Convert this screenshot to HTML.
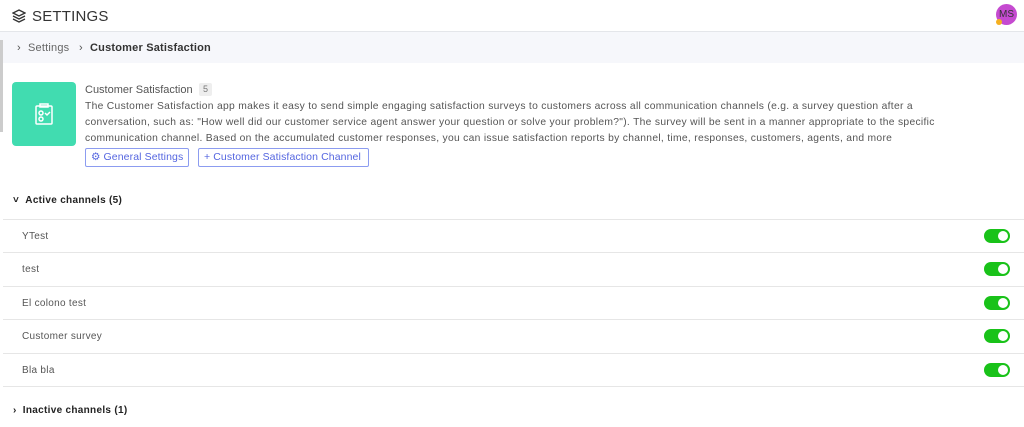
<!DOCTYPE html>
<html><head><style>
*{margin:0;padding:0;box-sizing:border-box}
body{width:1024px;height:427px;overflow:hidden;background:#fff;font-family:"Liberation Sans",sans-serif;color:#444;position:relative}
.hdr{position:absolute;left:0;top:0;width:1024px;height:32px;border-bottom:1px solid #e4e6ea;background:#fff}
.hdr .t{position:absolute;left:32px;top:8px;font-size:15px;color:#333;letter-spacing:.2px}
.bc{position:absolute;left:0;top:32px;width:1024px;height:31px;background:#f6f7fb;font-size:11px;letter-spacing:.2px}
.bc span{position:absolute;top:10px}
.strip{position:absolute;left:0;top:40px;width:3px;height:92px;background:#ccc}
.icon{position:absolute;left:12px;top:82px;width:64px;height:64px;background:#41dcb0;border-radius:4px}
.title{position:absolute;left:85px;top:84px;font-size:11px;color:#555;letter-spacing:0}
.badge{position:absolute;left:199px;top:83px;width:13px;height:13px;background:#eee;font-size:9px;color:#777;text-align:center;line-height:13px;border-radius:2px}
.desc{position:absolute;left:85px;top:99px;font-size:10.3px;line-height:16px;color:#555;letter-spacing:.3px;white-space:nowrap}
.btn{position:absolute;top:148px;height:19px;border:1px solid #8c9cf0;border-radius:2px;color:#5566e0;font-size:10.5px;line-height:17px;padding:0 5px;letter-spacing:.1px;white-space:nowrap;overflow:hidden}
.sec{position:absolute;left:13px;font-size:10px;font-weight:bold;color:#222;letter-spacing:.3px}
.row{position:absolute;left:3px;width:1021px;height:34px;border-top:1px solid #e6e6e6;font-size:10px;color:#555;letter-spacing:.3px}
.row span{position:absolute;left:19px;top:11px}
.tg{position:absolute;left:981px;top:9px;width:26px;height:14px;background:#19c219;border-radius:7px}
.tg:after{content:"";position:absolute;right:2px;top:2px;width:10px;height:10px;background:#fff;border-radius:50%}
</style></head><body>
<div class="hdr">
<svg style="position:absolute;left:12px;top:9px" width="14" height="14" viewBox="0 0 14 14" fill="none" stroke="#333" stroke-width="1.3"><path d="M7 1L13 4 7 7 1 4Z"/><path d="M1 7l6 3 6-3"/><path d="M1 10l6 3 6-3"/></svg>
<div class="t">SETTINGS</div>
<div style="position:absolute;left:996px;top:4px;width:21px;height:21px;border-radius:50%;background:#c54ad0;font-size:10px;color:#333;text-align:center;line-height:21px">MS</div>
<div style="position:absolute;left:996px;top:19px;width:6px;height:6px;border-radius:50%;background:#f5b020"></div>
</div>
<div class="bc">
<span style="left:17px;color:#555">›</span><span style="left:28px;color:#666">Settings</span>
<span style="left:79px;color:#555">›</span><span style="left:90px;font-weight:bold;color:#333">Customer Satisfaction</span>
</div>
<div class="strip"></div>
<div class="icon"><svg style="position:absolute;left:23px;top:21px" width="18" height="22" viewBox="0 0 18 22" fill="none" stroke="#fff" stroke-width="1.5"><rect x="1" y="3" width="16" height="18" rx="1"/><rect x="5" y="1" width="8" height="3"/><circle cx="6" cy="10" r="2"/><circle cx="6" cy="16" r="2"/><path d="M10 10l2 2 3-3"/></svg></div>
<div class="title">Customer Satisfaction</div>
<div class="badge">5</div>
<div class="desc">The Customer Satisfaction app makes it easy to send simple engaging satisfaction surveys to customers across all communication channels (e.g. a survey question after a<br>conversation, such as: "How well did our customer service agent answer your question or solve your problem?"). The survey will be sent in a manner appropriate to the specific<br>communication channel. Based on the accumulated customer responses, you can issue satisfaction reports by channel, time, responses, customers, agents, and more</div>
<div class="btn" style="left:85px;width:104px">⚙ General Settings</div>
<div class="btn" style="left:198px;width:171px">+ Customer Satisfaction Channel</div>
<div class="sec" style="top:195px">˅ &nbsp;Active channels (5)</div>
<div class="row" style="top:219px"><span>YTest</span><div class="tg"></div></div>
<div class="row" style="top:252px"><span>test</span><div class="tg"></div></div>
<div class="row" style="top:286px"><span>El colono test</span><div class="tg"></div></div>
<div class="row" style="top:319px"><span>Customer survey</span><div class="tg"></div></div>
<div class="row" style="top:353px"><span>Bla bla</span><div class="tg"></div></div>
<div class="row" style="top:386px;height:1px"></div>
<div class="sec" style="top:405px">› &nbsp;Inactive channels (1)</div>
</body></html>
